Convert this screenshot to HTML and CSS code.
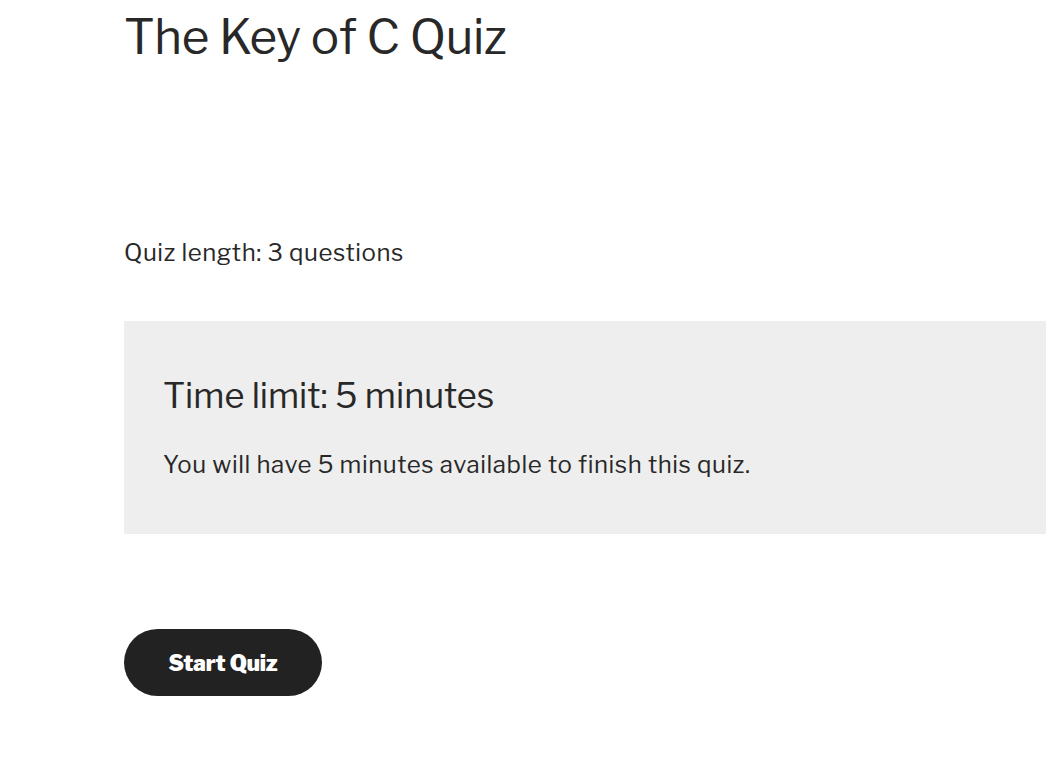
FILE: index.html
```html
<!DOCTYPE html>
<html>
<head>
    <meta charset="utf-8" />
    <title>The Key of C Quiz</title>
    <link rel="stylesheet" href="styles.css">
</head>

<body>
    <div class="main-box">
        <h1 class="quiz-title">The Key of C Quiz</h1>

        <p class="quiz-length">Quiz length: 3 questions</p>

        <div class="time-box">
            <h2>Time limit: 5 minutes</h2>
            <p>You will have 5 minutes available to finish this quiz.</p>
        </div>

        <div class="start-pad">
            <button class="btn-start">Start Quiz</button>
        </div>
    </div>
</body>
</html>
```

FILE: styles.css
```css
* {
    margin: 0px;
    padding: 0px;
}

body {
    font-family: "Libre Franklin", Inter, "Noto Sans", sans-serif;
    color: #282828;
    background-color: #fff;
    overflow: hidden;
}

.main-box {
    padding-left: 124px;
}

.quiz-title {
    margin-top: 8px;
    font-size: 47.5px;
    font-weight: 400;
    line-height: 58px;
    letter-spacing: -0.3px;
}

.quiz-length {
    margin-top: 172px;
    font-size: 24px;
    line-height: 30px;
    letter-spacing: 0.55px;
}

.time-box {
    margin-top: 53px;
    padding: 54px 39px 54px 39px;
    background-color: #eeeeee;
}

.time-box h2 {
    font-size: 34.3px;
    font-weight: 400;
    line-height: 42px;
}

.time-box p {
    margin-top: 33px;
    font-size: 24px;
    line-height: 30px;
    letter-spacing: 0.55px;
}

.start-pad {
    margin-top: 95px;
}

.btn-start {
    width: 198px;
    height: 67px;
    border: none;
    border-radius: 34px;
    background-color: #222;
    color: #fff;
    font-family: "Libre Franklin", Inter, "Noto Sans", sans-serif;
    font-size: 22px;
    font-weight: 900;
    letter-spacing: -0.2px;
}
```
